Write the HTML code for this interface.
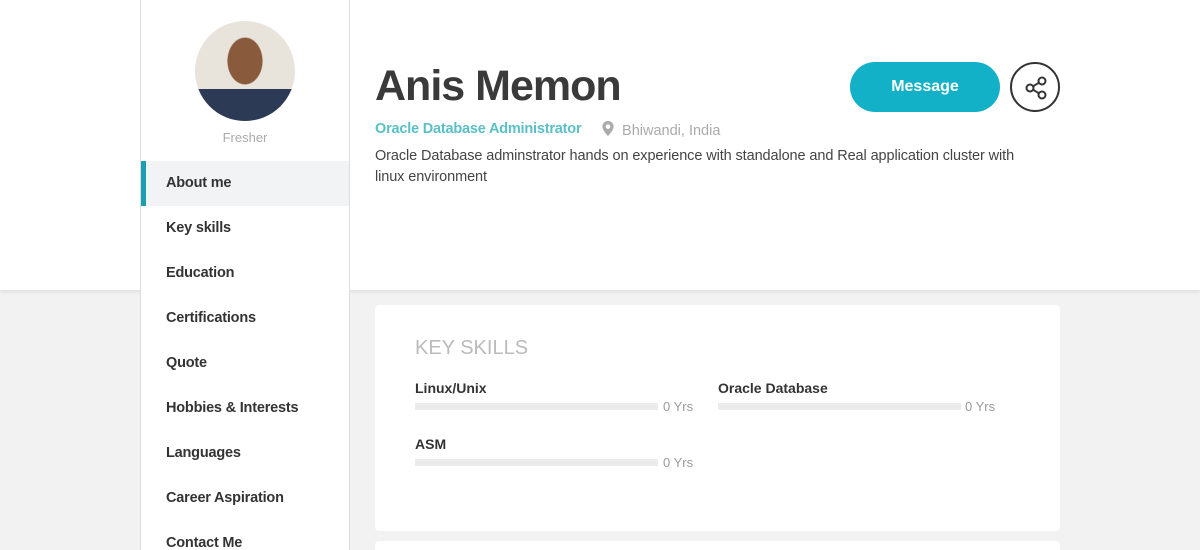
<!DOCTYPE html>
<html style="overflow:hidden;height:550px"><head><style>
*{margin:0;padding:0;box-sizing:border-box}
body{width:1200px;height:550px;overflow:hidden;background:#f2f2f2;font-family:"Liberation Sans",sans-serif;position:relative}
.top{position:absolute;left:0;top:0;width:1200px;height:290px;background:#fff;box-shadow:0 2px 4px rgba(0,0,0,.08)}
.side{position:absolute;left:140px;top:0;width:210px;height:550px;background:#fff;border-left:1px solid #ddd;border-right:1px solid #ddd;z-index:2}
.av{position:absolute;left:54px;top:21px;width:100px;height:100px;border-radius:50%;background:radial-gradient(ellipse 18px 24px at 50% 40%,#8a5a3c 0 95%,transparent 100%),linear-gradient(#e8e4dc 0 68%,#2c3a55 68%);overflow:hidden}
.fr{position:absolute;top:130px;width:100%;text-align:center;color:#aaa;font-size:13px}
.nav{position:absolute;top:161px;left:0;width:208px}
.nav div{height:45px;line-height:45px;padding-left:25px;font-size:14.5px;font-weight:bold;color:#333;letter-spacing:-.2px}
.nav .a{background:#f2f3f5;border-left:5px solid #1a9fb0;padding-left:20px}
h1{position:absolute;left:375px;top:62px;font-size:43px;color:#3a3a3a;font-weight:bold;letter-spacing:-1px;z-index:3}
.role{position:absolute;left:375px;top:121px;font-size:14.5px;color:#5bbfc8;font-weight:bold;z-index:3;letter-spacing:-.2px}
.loc{position:absolute;left:602px;top:121px;font-size:14.5px;color:#aaa;z-index:3}
.desc{position:absolute;left:375px;top:146px;width:670px;font-size:14.5px;line-height:21px;color:#444;z-index:3;letter-spacing:-.1px}
.btn{position:absolute;left:850px;top:62px;width:150px;height:50px;border-radius:25px;background:#12b1c8;color:#fff;font-weight:bold;font-size:16px;text-align:center;line-height:50px;z-index:3}
.sh{position:absolute;left:1010px;top:62px;width:50px;height:50px;border:2px solid #333;border-radius:50%;z-index:3}
.card{position:absolute;left:375px;top:305px;width:685px;height:226px;background:#fff;border-radius:4px}
.card2{position:absolute;left:375px;top:541px;width:685px;height:9px;background:#fff;border-radius:4px 4px 0 0}
.kt{position:absolute;left:40px;top:32px;font-size:20px;color:#bbb}
.sk{position:absolute;font-size:14px;font-weight:bold;color:#333}
.bar{position:absolute;height:7px;width:243px;background:#ebebeb}
.yr{position:absolute;font-size:13px;color:#999}
</style></head><body>
<div class="top"></div>
<div class="side">
<div class="av"></div>
<div class="fr">Fresher</div>
<div class="nav"><div class="a">About me</div><div>Key skills</div><div>Education</div><div>Certifications</div><div>Quote</div><div>Hobbies &amp; Interests</div><div>Languages</div><div>Career Aspiration</div><div>Contact Me</div></div>
</div>
<h1>Anis Memon</h1>
<div class="role">Oracle Database Administrator</div>
<div class="loc"><svg width="12" height="15" viewBox="0 0 12 16" style="vertical-align:-1px"><path d="M6 0a6 6 0 0 0-6 6c0 4 6 10 6 10s6-6 6-10a6 6 0 0 0-6-6zm0 8.5a2.5 2.5 0 1 1 0-5 2.5 2.5 0 0 1 0 5z" fill="#aaa"/></svg>&nbsp; Bhiwandi, India</div>
<div class="desc">Oracle Database adminstrator hands on experience with standalone and Real application cluster with<br>linux environment</div>
<div class="btn">Message</div>
<div class="sh"><svg width="46" height="46" viewBox="0 0 46 46"><g fill="none" stroke="#333" stroke-width="2"><circle cx="30" cy="17" r="3.5"/><circle cx="18" cy="24" r="3.5"/><circle cx="30" cy="31" r="3.5"/><path d="M21 22.3l6-3.6M21 25.7l6 3.6"/></g></svg></div>
<div class="card">
<div class="kt">KEY SKILLS</div>
<div class="sk" style="left:40px;top:75px">Linux/Unix</div>
<div class="bar" style="left:40px;top:98px"></div><div class="yr" style="left:288px;top:94px">0 Yrs</div>
<div class="sk" style="left:343px;top:75px">Oracle Database</div>
<div class="bar" style="left:343px;top:98px"></div><div class="yr" style="left:590px;top:94px">0 Yrs</div>
<div class="sk" style="left:40px;top:131px">ASM</div>
<div class="bar" style="left:40px;top:154px"></div><div class="yr" style="left:288px;top:150px">0 Yrs</div>
</div>
<div class="card2"></div>
</body></html>
